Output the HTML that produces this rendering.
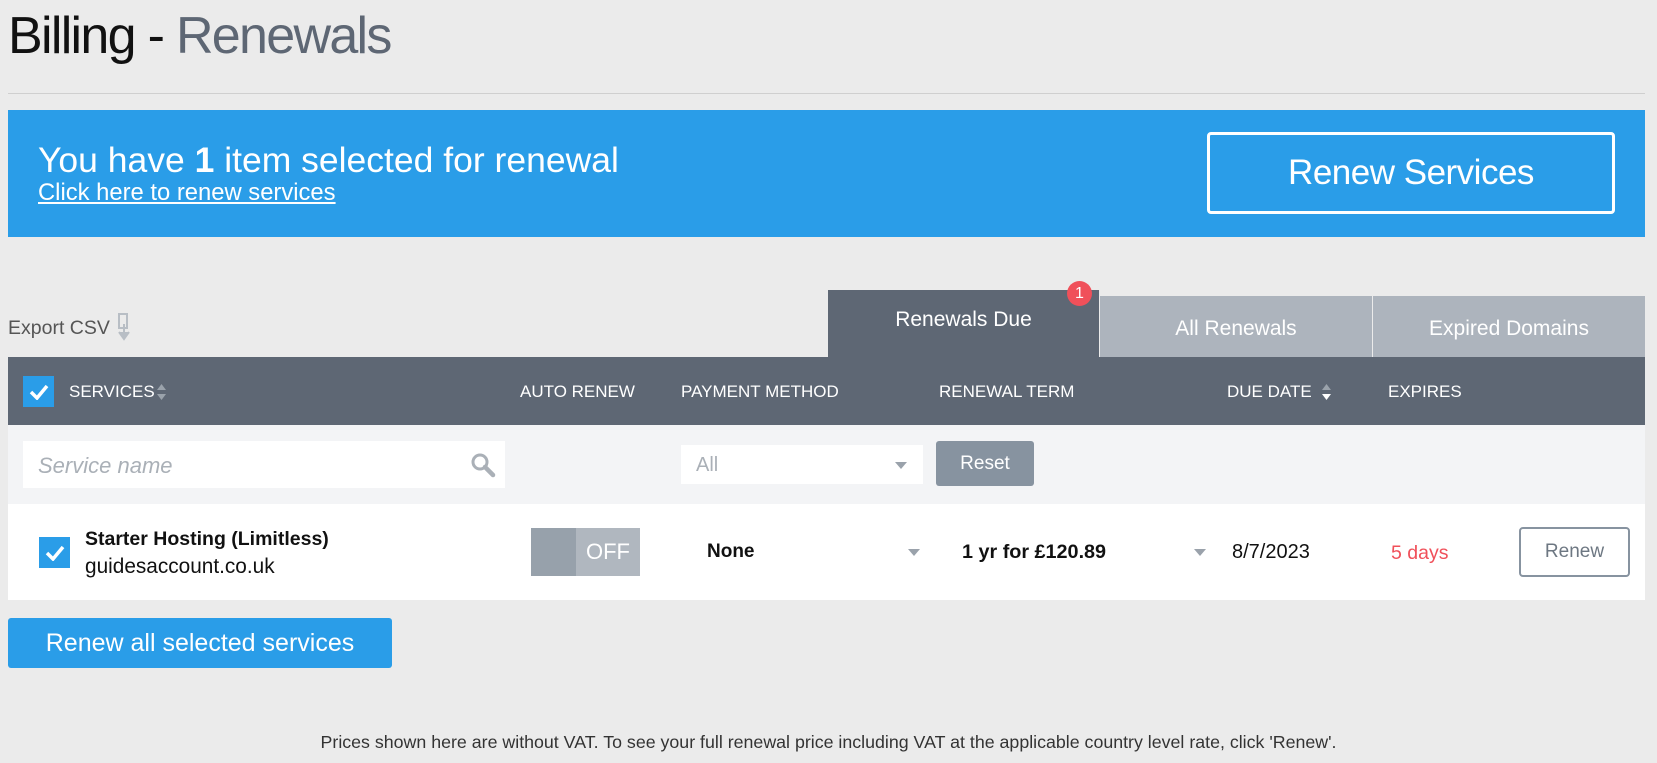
<!DOCTYPE html>
<html><head><meta charset="utf-8"><style>
*{box-sizing:border-box;margin:0;padding:0}
body{width:1657px;height:763px;background:#ebebeb;font-family:"Liberation Sans",sans-serif;position:relative;overflow:hidden;color:#222}
.a{position:absolute;white-space:nowrap}
.hdr{color:#fff;font-size:17px;top:382px}
.tab{position:absolute;color:#fff;font-size:21px;display:flex;align-items:center;justify-content:center}
.cb{position:absolute;background:#2a9de8;display:flex;align-items:center;justify-content:center}
.arr{position:absolute;width:0;height:0;border-left:6px solid transparent;border-right:6px solid transparent;border-top:7px solid #9aa2ab}
</style></head><body>
<div class="a" style="left:8px;top:6px;font-size:52px;letter-spacing:-1.7px;color:#111">Billing - <span style="color:#5e6774">Renewals</span></div>
<div class="a" style="left:8px;top:93px;width:1637px;height:1px;background:#cfcfcf"></div>
<div class="a" style="left:8px;top:110px;width:1637px;height:127px;background:#2a9de8"></div>
<div class="a" style="left:38px;top:140px;font-size:35.5px;color:#fff">You have <b>1</b> item selected for renewal</div>
<div class="a" style="left:38px;top:179px;font-size:23.8px;color:#fff;text-decoration:underline">Click here to renew services</div>
<div class="a" style="left:1207px;top:132px;width:408px;height:82px;border:3px solid #fff;border-radius:4px;color:#fff;font-size:35px;display:flex;align-items:center;justify-content:center;letter-spacing:-0.5px">Renew Services</div>

<div class="a" style="left:8px;top:317px;font-size:19.5px;color:#555">Export CSV</div>
<svg class="a" style="left:116px;top:312px" width="16" height="30" viewBox="0 0 16 30"><path d="M3 2h8v14H3z" fill="none" stroke="#b8bec5" stroke-width="2"/><path d="M8 12v10M3 20l5 7 5-7" fill="#b8bec5" stroke="#b8bec5" stroke-width="2"/></svg>

<div class="tab" style="left:828px;top:290px;width:271px;height:67px;background:#5e6774;padding-bottom:8px">Renewals Due</div>
<div class="a" style="left:1067px;top:281px;width:25px;height:25px;border-radius:50%;background:#f0505a;color:#fff;font-size:16px;text-align:center;line-height:25px">1</div>
<div class="tab" style="left:1100px;top:296px;width:272px;height:61px;background:#adb4bd;padding-top:4px">All Renewals</div>
<div class="tab" style="left:1373px;top:296px;width:272px;height:61px;background:#adb4bd;padding-top:4px">Expired Domains</div>

<div class="a" style="left:8px;top:357px;width:1637px;height:68px;background:#5e6774"></div>
<div class="cb" style="left:23px;top:376px;width:31px;height:31px"><svg width="20" height="16" viewBox="0 0 20 16"><path d="M2 8l6 6L18 2" fill="none" stroke="#fff" stroke-width="3.5"/></svg></div>
<div class="a hdr" style="left:69px">SERVICES</div>
<svg class="a" style="left:156px;top:383px" width="11" height="18"><path d="M1 7l4.5-6 4.5 6zM1 11l4.5 6 4.5-6z" fill="#9aa2ab"/></svg>
<div class="a hdr" style="left:520px">AUTO RENEW</div>
<div class="a hdr" style="left:681px">PAYMENT METHOD</div>
<div class="a hdr" style="left:939px">RENEWAL TERM</div>
<div class="a hdr" style="left:1227px">DUE DATE</div>
<svg class="a" style="left:1321px;top:383px" width="11" height="18"><path d="M1 7l4.5-6 4.5 6z" fill="#9aa2ab"/><path d="M1 11l4.5 6 4.5-6z" fill="#fff"/></svg>
<div class="a hdr" style="left:1388px">EXPIRES</div>

<div class="a" style="left:8px;top:425px;width:1637px;height:79px;background:#f3f4f6"></div>
<div class="a" style="left:23px;top:441px;width:482px;height:47px;background:#fff"></div>
<div class="a" style="left:38px;top:453px;font-size:22px;font-style:italic;color:#aab0b7">Service name</div>
<svg class="a" style="left:470px;top:452px" width="26" height="26" viewBox="0 0 26 26"><circle cx="10" cy="10" r="7" fill="none" stroke="#aab0b7" stroke-width="3"/><path d="M15 15l8 8" stroke="#aab0b7" stroke-width="4.5" stroke-linecap="round"/></svg>
<div class="a" style="left:681px;top:445px;width:242px;height:39px;background:#fff"></div>
<div class="a" style="left:696px;top:454px;font-size:20px;color:#aab0b7">All</div>
<div class="arr" style="left:895px;top:462px"></div>
<div class="a" style="left:936px;top:441px;width:98px;height:45px;background:#8793a0;border-radius:3px;color:#fff;font-size:19px;display:flex;align-items:center;justify-content:center">Reset</div>

<div class="a" style="left:8px;top:504px;width:1637px;height:96px;background:#fff"></div>
<div class="cb" style="left:39px;top:537px;width:31px;height:31px"><svg width="20" height="16" viewBox="0 0 20 16"><path d="M2 8l6 6L18 2" fill="none" stroke="#fff" stroke-width="3.5"/></svg></div>
<div class="a" style="left:85px;top:528px;font-size:19.5px;font-weight:bold;color:#111">Starter Hosting (Limitless)</div>
<div class="a" style="left:85px;top:555px;font-size:20.8px;color:#111">guidesaccount.co.uk</div>
<div class="a" style="left:531px;top:528px;width:45px;height:48px;background:#97a1ab"></div>
<div class="a" style="left:576px;top:528px;width:64px;height:48px;background:#b0b7bf;color:#fff;font-size:22px;display:flex;align-items:center;justify-content:center">OFF</div>
<div class="a" style="left:707px;top:541px;font-size:19px;font-weight:bold;color:#111">None</div>
<div class="arr" style="left:908px;top:549px"></div>
<div class="a" style="left:962px;top:541px;font-size:19.8px;font-weight:bold;color:#111">1 yr for £120.89</div>
<div class="arr" style="left:1194px;top:549px"></div>
<div class="a" style="left:1232px;top:541px;font-size:20px;color:#111">8/7/2023</div>
<div class="a" style="left:1391px;top:542px;font-size:19.5px;color:#f0505a">5 days</div>
<div class="a" style="left:1519px;top:527px;width:111px;height:50px;border:2px solid #8793a0;border-radius:4px;color:#6d7782;font-size:19px;display:flex;align-items:center;justify-content:center">Renew</div>

<div class="a" style="left:8px;top:618px;width:384px;height:50px;background:#2a9de8;border-radius:3px;color:#fff;font-size:25px;display:flex;align-items:center;justify-content:center">Renew all selected services</div>

<div class="a" style="left:0;width:1657px;top:732px;text-align:center;font-size:17.8px;color:#333">Prices shown here are without VAT. To see your full renewal price including VAT at the applicable country level rate, click 'Renew'.</div>
</body></html>
